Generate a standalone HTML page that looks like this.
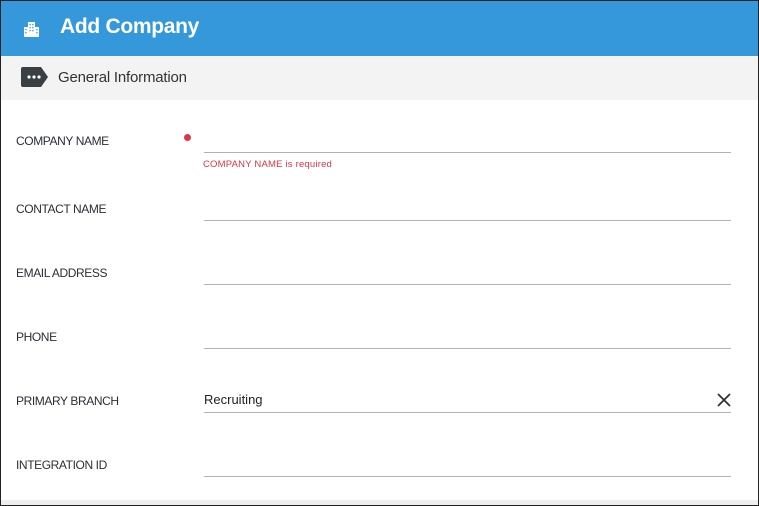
<!DOCTYPE html>
<html><head><style>
body{margin:0;width:759px;height:506px;overflow:hidden;font-family:"Liberation Sans",sans-serif;}
.wrap{position:absolute;left:0;top:0;width:757px;height:504px;border:1px solid #222;background:#fff;}
.hd{position:absolute;left:0;top:0;width:757px;height:55px;background:#3498db;}
.hd .t{position:absolute;left:59px;top:14px;color:#fff;font-weight:bold;font-size:21px;letter-spacing:-0.3px;}
.sb{position:absolute;left:0;top:55px;width:757px;height:44px;background:#f3f3f3;}
.sb .t{position:absolute;left:57px;top:13px;font-size:15px;color:#333;letter-spacing:-0.2px;}
.lb{position:absolute;left:15px;font-size:12px;color:#2a2f36;letter-spacing:-0.4px;}
.ln{position:absolute;left:203px;width:527px;height:1px;background:#a9b4bc;}
.bot{position:absolute;left:0;top:499px;width:757px;height:5px;background:#eee;}
</style></head><body><div class="wrap">
<div class="hd">
<svg style="position:absolute;left:22px;top:20px" width="17" height="17" viewBox="0 0 17 17" fill="#fff"><rect x="5" y="1" width="7" height="15"/><rect x="1" y="6" width="4" height="10"/><rect x="12" y="6" width="4" height="10"/><g fill="#3498db"><rect x="6.5" y="3" width="1.3" height="1.3"/><rect x="9.2" y="3" width="1.3" height="1.3"/><rect x="6.5" y="6" width="1.3" height="1.3"/><rect x="9.2" y="6" width="1.3" height="1.3"/><rect x="6.5" y="9" width="1.3" height="1.3"/><rect x="9.2" y="9" width="1.3" height="1.3"/><rect x="2.3" y="8" width="1.3" height="1.3"/><rect x="13.3" y="8" width="1.3" height="1.3"/><rect x="2.3" y="11" width="1.3" height="1.3"/><rect x="13.3" y="11" width="1.3" height="1.3"/></g></svg>
<div class="t">Add Company</div></div>
<div class="sb">
<svg style="position:absolute;left:20px;top:11px" width="28" height="20" viewBox="0 0 28 20"><path d="M2 0H20L27 10L20 20H2Q0 20 0 18V2Q0 0 2 0Z" fill="#3a3f46"/><circle cx="8" cy="10" r="1.6" fill="#fff"/><circle cx="13" cy="10" r="1.6" fill="#fff"/><circle cx="18" cy="10" r="1.6" fill="#fff"/></svg>
<div class="t">General Information</div></div>
<div class="lb" style="top:133px">COMPANY NAME</div>
<div style="position:absolute;left:183px;top:133px;width:7px;height:7px;border-radius:50%;background:#dc3545"></div>
<div class="ln" style="top:151px"></div>
<div style="position:absolute;left:202px;top:158px;font-size:9.5px;color:#dc3545;letter-spacing:0.2px">COMPANY NAME is required</div>
<div class="lb" style="top:201px">CONTACT NAME</div><div class="ln" style="top:219px"></div>
<div class="lb" style="top:265px">EMAIL ADDRESS</div><div class="ln" style="top:283px"></div>
<div class="lb" style="top:329px">PHONE</div><div class="ln" style="top:347px"></div>
<div class="lb" style="top:393px">PRIMARY BRANCH</div>
<div style="position:absolute;left:203px;top:391px;font-size:13px;color:#222">Recruiting</div>
<svg style="position:absolute;left:716px;top:392px" width="14" height="14" viewBox="0 0 14 14"><path d="M1 1L13 13M13 1L1 13" stroke="#333" stroke-width="1.8"/></svg>
<div class="ln" style="top:411px"></div>
<div class="lb" style="top:457px">INTEGRATION ID</div><div class="ln" style="top:475px"></div>
<div class="bot"></div>
</div></body></html>
